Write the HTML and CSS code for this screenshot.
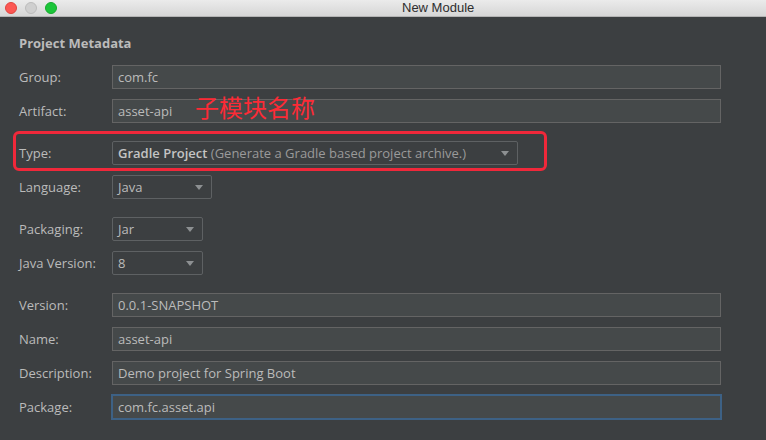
FILE: index.html
```html
<!DOCTYPE html>
<html lang="en">

<head>
    <meta charset="UTF-8">
    <meta name="viewport" content="width=device-width, initial-scale=1.0">
    <title>New Module</title>
    <link rel="stylesheet" href="styles.css">
</head>

<body>
    <div class="titlebar">
        <div class="lights">
            <span class="light red"></span>
            <span class="light gray"></span>
            <span class="light green"></span>
        </div>
        <div class="title">New Module</div>
    </div>

    <div class="content">
        <div class="heading">Project Metadata</div>

        <div class="form">
            <div class="row first">
                <label>Group:</label>
                <div class="field">com.fc</div>
            </div>
            <div class="row">
                <label>Artifact:</label>
                <div class="field">asset-api</div>
            </div>
            <div class="row gap">
                <label>Type:</label>
                <div class="combo w-type"><b>Gradle Project</b> <span class="hint">(Generate a Gradle based project archive.)</span></div>
            </div>
            <div class="row">
                <label>Language:</label>
                <div class="combo w-lang">Java</div>
            </div>
            <div class="row gap">
                <label>Packaging:</label>
                <div class="combo w-small">Jar</div>
            </div>
            <div class="row">
                <label>Java Version:</label>
                <div class="combo w-small">8</div>
            </div>
            <div class="row gap">
                <label>Version:</label>
                <div class="field">0.0.1-SNAPSHOT</div>
            </div>
            <div class="row">
                <label>Name:</label>
                <div class="field">asset-api</div>
            </div>
            <div class="row">
                <label>Description:</label>
                <div class="field">Demo project for Spring Boot</div>
            </div>
            <div class="row">
                <label>Package:</label>
                <div class="field focus">com.fc.asset.api</div>
            </div>
        </div>
    </div>

    <!-- 标注 -->
    <div class="note">子模块名称</div>
    <div class="mark"></div>
</body>

</html>
```

FILE: styles.css
```css
* {
    margin: 0;
    padding: 0;
    box-sizing: border-box;
}

body {
    width: 766px;
    height: 440px;
    overflow: hidden;
    background-color: #3c3f41;
    font-family: "Open Sans", "Liberation Sans", sans-serif;
    font-size: 13px;
    color: #bbbbbb;
    position: relative;
}

.titlebar {
    height: 17px;
    background: linear-gradient(#ebebeb, #d6d6d6);
    border-bottom: 1px solid #b4b4b4;
    display: flex;
    align-items: center;
    position: relative;
}

.lights {
    display: flex;
    gap: 8px;
    padding-left: 5px;
}

.light {
    width: 12px;
    height: 12px;
    border-radius: 50%;
}

.red {
    background-color: #fc5753;
    border: 1px solid #e0443e;
}

.gray {
    background-color: #cfcfcf;
    border: 1px solid #bcbcbc;
}

.green {
    background-color: #1bc539;
    border: 1px solid #14ab2c;
}

.title {
    position: absolute;
    left: 402px;
    top: 0;
    line-height: 16px;
    font-family: "Liberation Sans", sans-serif;
    font-size: 13px;
    color: #2e2e2e;
}

.content {
    padding: 18px 0 0 19px;
}

.heading {
    font-weight: 700;
    color: #bbbbbb;
    line-height: 16px;
}

.form {
    display: flex;
    flex-direction: column;
}

.row {
    display: flex;
    align-items: center;
    height: 24px;
    margin-top: 10px;
}

.row.first {
    margin-top: 14px;
}

.row.gap {
    margin-top: 18px;
}

label {
    width: 93px;
    flex-shrink: 0;
}

.field {
    width: 609px;
    height: 24px;
    line-height: 22px;
    padding-left: 5px;
    background-color: #45494a;
    border: 1px solid #646464;
}

.field.focus {
    height: 26px;
    line-height: 22px;
    margin-left: -1px;
    width: 611px;
    border: 2px solid #3d6185;
}

.combo {
    height: 24px;
    line-height: 22px;
    padding-left: 5px;
    border: 1px solid #5e6163;
    border-radius: 2px;
    position: relative;
    white-space: nowrap;
}

.combo::after {
    content: "";
    position: absolute;
    right: 8px;
    top: 9px;
    border-left: 4px solid transparent;
    border-right: 4px solid transparent;
    border-top: 5px solid #8d9092;
}

.combo b {
    font-weight: 600;
    color: #c4c4c4;
}

.hint {
    color: #9a9a9a;
}

.w-type {
    width: 406px;
}

.w-lang {
    width: 100px;
}

.w-small {
    width: 91px;
}

.note {
    position: absolute;
    left: 195px;
    top: 94px;
    font-family: "Noto Sans CJK SC", sans-serif;
    font-size: 24px;
    line-height: 26px;
    color: #fb2b36;
}

.mark {
    position: absolute;
    left: 13px;
    top: 131px;
    width: 534px;
    height: 40px;
    border: 3px solid #f0283a;
    border-radius: 6px;
}
```
